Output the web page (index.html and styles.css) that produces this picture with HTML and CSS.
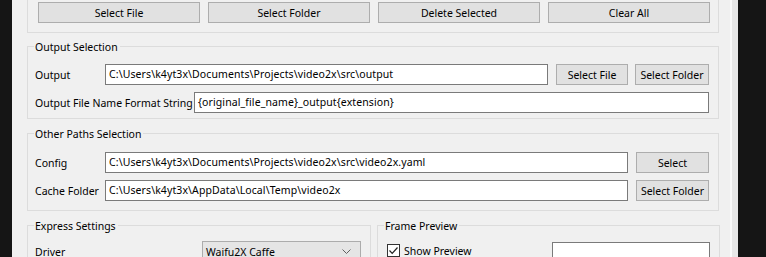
FILE: index.html
```html
<!DOCTYPE html>
<html>
<head>
<meta charset="utf-8">
<link rel="stylesheet" href="styles.css">
</head>
<body>
<div class="screen">
  <div class="dark-left"></div>
  <div class="window">
    <div class="group group-top">
      <div class="btn-row">
        <button class="btn btn-wide">Select File</button>
        <button class="btn btn-wide">Select Folder</button>
        <button class="btn btn-wide">Delete Selected</button>
        <button class="btn btn-wide">Clear All</button>
      </div>
    </div>

    <div class="group group-output">
      <span class="group-title">Output Selection</span>
      <div class="row">
        <span class="label label-short">Output</span>
        <div class="input input-output">C:\Users\k4yt3x\Documents\Projects\video2x\src\output</div>
        <button class="btn btn-file">Select File</button>
        <button class="btn btn-folder">Select Folder</button>
      </div>
      <div class="row">
        <span class="label label-long">Output File Name Format String</span>
        <div class="input input-fill">{original_file_name}_output{extension}</div>
      </div>
    </div>

    <div class="group group-paths">
      <span class="group-title">Other Paths Selection</span>
      <div class="row">
        <span class="label label-short">Config</span>
        <div class="input input-path">C:\Users\k4yt3x\Documents\Projects\video2x\src\video2x.yaml</div>
        <button class="btn btn-side">Select</button>
      </div>
      <div class="row">
        <span class="label label-short">Cache Folder</span>
        <div class="input input-path">C:\Users\k4yt3x\AppData\Local\Temp\video2x</div>
        <button class="btn btn-side">Select Folder</button>
      </div>
    </div>

    <div class="bottom-row">
      <div class="group group-express">
        <span class="group-title">Express Settings</span>
        <div class="row">
          <span class="label label-driver">Driver</span>
          <div class="combo">
            <span>Waifu2X Caffe</span>
            <svg class="chev" width="9" height="6" viewBox="0 0 9 6"><path d="M0.5 0.5 L4.5 4.5 L8.5 0.5" fill="none" stroke="#606060" stroke-width="1"/></svg>
          </div>
        </div>
      </div>
      <div class="group group-preview">
        <span class="group-title">Frame Preview</span>
        <div class="row row-preview">
          <span class="check">
            <svg width="11" height="11" viewBox="0 0 11 11"><path d="M1.5 5.5 L4.2 8.3 L9.5 2.5" fill="none" stroke="#222" stroke-width="1.2"/></svg>
          </span>
          <span class="check-label">Show Preview</span>
          <div class="preview-box"></div>
        </div>
      </div>
    </div>
  </div>
  <div class="edge"></div>
  <div class="dark-right"></div>
</div>
</body>
</html>
```

FILE: styles.css
```css
* { box-sizing: border-box; }
html, body { margin: 0; padding: 0; }
body {
  background: #151515;
  font-family: "Noto Sans", "Open Sans", sans-serif;
  font-size: 10.5px;
  color: #000;
}
.screen {
  display: flex;
  width: 766px;
  height: 257px;
  overflow: hidden;
}
.dark-left { width: 12px; flex: none; background: #151515; }
.window {
  width: 718px;
  flex: none;
  background: #f0f0f0;
  padding-left: 15px;
  padding-right: 11px;
}
.edge {
  width: 8px;
  flex: none;
  background: #e8e8e8;
  border-left: 2px solid #fbfbfb;
}
.dark-right { flex: 1; background: #151515; }

.group {
  position: relative;
  border: 1px solid #dcdcdc;
}
.group-title {
  position: absolute;
  left: 6px;
  top: -8px;
  padding: 0 2px 0 1px;
  line-height: 16px;
  background: #f0f0f0;
}
.group-top {
  border-top: none;
  padding: 2px 9px 9px 10px;
}
.btn-row { display: flex; gap: 8px; }
.btn {
  font: inherit;
  color: #000;
  background: #e1e1e1;
  border: 1px solid #adadad;
  height: 21px;
  padding: 0;
  margin: 0;
  flex: none;
}
.btn-wide { width: 162px; }

.group-output {
  margin-top: 13px;
  padding: 17px 9px 5px 7px;
}
.row {
  display: flex;
  align-items: center;
  height: 21px;
}
.row + .row { margin-top: 7px; }
.label { flex: none; white-space: nowrap; }
.label-short { width: 70px; }
.label-long { width: 159px; }
.input {
  height: 21px;
  background: #fff;
  border: 1px solid #7a7a7a;
  padding: 0 3px;
  line-height: 19px;
  white-space: nowrap;
  overflow: hidden;
  letter-spacing: 0.1px;
}
.input-output { width: 444px; margin-right: 8px; }
.btn-file { width: 72px; margin-right: 7px; }
.btn-folder { width: 74px; }
.input-fill { flex: 1; }

.group-paths {
  margin-top: 14px;
  padding: 18px 9px 9px 7px;
}
.input-path { width: 524px; margin-right: 8px; }
.btn-side { width: 73px; }

.bottom-row {
  display: flex;
  gap: 6px;
  margin-top: 14px;
}
.group-express {
  width: 344px;
  height: 60px;
  padding: 15px 9px 0 7px;
}
.label-driver { width: 167px; }
.combo {
  width: 159px;
  height: 22px;
  background: #e5e5e5;
  border: 1px solid #acacac;
  display: flex;
  align-items: center;
  justify-content: space-between;
  padding: 0 9px 0 3px;
}
.chev { display: block; }
.group-preview {
  width: 343px;
  height: 60px;
  padding: 16px 9px 0 9px;
}
.row-preview { align-items: flex-start; }
.check {
  width: 13px;
  height: 13px;
  margin-top: 2px;
  border: 1px solid #333;
  background: #fff;
  display: flex;
  align-items: center;
  justify-content: center;
  flex: none;
}
.check svg { display: block; }
.check-label {
  margin-left: 4px;
  width: 148px;
  flex: none;
  line-height: 16px;
  margin-top: 1px;
}
.preview-box {
  width: 158px;
  height: 30px;
  background: #fff;
  border: 1px solid #7a7a7a;
}
```
